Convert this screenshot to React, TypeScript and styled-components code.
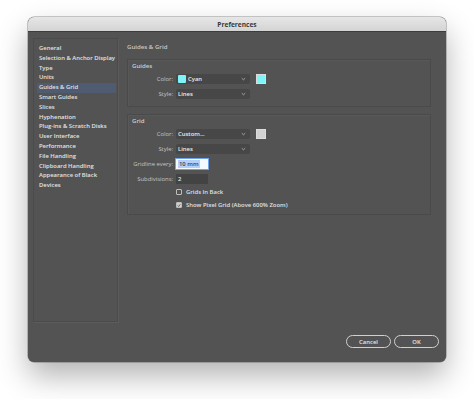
import React from 'react'
import styled, { createGlobalStyle } from 'styled-components'

const GlobalStyle = createGlobalStyle`
  html, body {
    margin: 0;
    padding: 0;
    background: #ffffff;
  }
  body {
    font-family: 'Open Sans', 'Liberation Sans', sans-serif;
    -webkit-font-smoothing: antialiased;
  }
`

const Page = styled.div`
  width: 474px;
  height: 399px;
  padding: 17px 0 0 28px;
  box-sizing: border-box;
`

const Window = styled.div`
  width: 418px;
  height: 345px;
  border-radius: 6px;
  overflow: hidden;
  display: flex;
  flex-direction: column;
  background: #535353;
  box-shadow: 0 14px 30px rgba(0, 0, 0, 0.3), 0 0 0 0.5px rgba(0, 0, 0, 0.4);
`

const TitleBar = styled.div`
  height: 15px;
  flex: none;
  display: flex;
  align-items: center;
  justify-content: center;
  background: linear-gradient(#e6e6e6, #d4d4d4);
  border-bottom: 1px solid #3c3c3c;
  box-sizing: border-box;
  font-size: 6.6px;
  font-weight: 700;
  color: #3a3a3a;
`

const Body = styled.div`
  flex: 1;
  display: flex;
  flex-direction: column;
  padding: 6px 15px 0 5px;
`

const Main = styled.div`
  display: flex;
  gap: 9px;
  height: 284px;
`

const Sidebar = styled.ul`
  width: 85px;
  margin: 0;
  padding: 5px 1px 0 3px;
  box-sizing: border-box;
  list-style: none;
  border: 1px solid #4b4b4b;
  box-shadow: 1px 1px 0 #5b5b5b;
`

const NavItem = styled.li<{ $active?: boolean }>`
  height: 9.8px;
  line-height: 9.8px;
  padding-left: 2px;
  font-size: 5.9px;
  font-weight: 600;
  color: #e4e4e4;
  white-space: nowrap;
  background: ${(p) => (p.$active ? '#4e5b70' : 'transparent')};
`

const Content = styled.div`
  flex: 1;
  display: flex;
  flex-direction: column;
  gap: 6px;
`

const Heading = styled.div`
  margin-top: 4px;
  height: 10px;
  line-height: 10px;
  font-size: 6.1px;
  font-weight: 600;
  color: #c9c9c9;
`

const Group = styled.div<{ $h: number }>`
  height: ${(p) => p.$h}px;
  box-sizing: border-box;
  border: 1px solid #4a4a4a;
  box-shadow: inset 1px 1px 0 #585858;
  padding: 1px 4px 0 4px;
  margin-top: 1px;
`

const GroupTitle = styled.div`
  height: 10px;
  line-height: 10px;
  font-size: 6.1px;
  font-weight: 600;
  color: #cfcfcf;
  margin-bottom: 2px;
`

const Rows = styled.div`
  display: grid;
  grid-template-columns: 41px auto;
  column-gap: 3px;
  row-gap: 4px;
  align-items: center;
  justify-items: start;
`

const Label = styled.span`
  justify-self: end;
  font-size: 5.9px;
  font-weight: 500;
  color: #c4c4c4;
  white-space: nowrap;
`

const Control = styled.div`
  display: flex;
  align-items: center;
  gap: 6px;
  height: 11px;
`

const Select = styled.div`
  width: 74px;
  height: 10px;
  box-sizing: border-box;
  display: flex;
  align-items: center;
  gap: 2px;
  padding: 0 4px 0 2px;
  background: #474747;
  border-radius: 2px;
  font-size: 5.9px;
  font-weight: 600;
  color: #ececec;
`

const SelectText = styled.span`
  flex: 1;
`

const Chip = styled.span<{ $c: string }>`
  width: 8px;
  height: 8px;
  background: ${(p) => p.$c};
  border-radius: 1px;
`

const Swatch = styled.div<{ $c: string }>`
  width: 10px;
  height: 10px;
  background: ${(p) => p.$c};
  border: 1px solid #dcdcdc;
  box-sizing: border-box;
`

const Field = styled.div<{ $focus?: boolean }>`
  width: 32px;
  height: 10px;
  box-sizing: border-box;
  display: flex;
  align-items: center;
  padding-left: 2px;
  font-size: 5.9px;
  font-weight: 600;
  background: ${(p) => (p.$focus ? '#f4f8ff' : '#434343')};
  color: ${(p) => (p.$focus ? '#2b3f63' : '#e8e8e8')};
  box-shadow: ${(p) => (p.$focus ? '0 0 0 1px #6fa2e8' : 'none')};
`

const Selected = styled.span`
  background: #b6d0f5;
  padding: 0 1px;
`

const Check = styled.div`
  grid-column: 2;
  display: flex;
  align-items: center;
  gap: 4px;
  height: 10px;
  margin-top: -1px;
  font-size: 5.9px;
  font-weight: 600;
  color: #e0e0e0;
`

const Box = styled.span<{ $on?: boolean }>`
  width: 6px;
  height: 6px;
  box-sizing: border-box;
  border: 1px solid #bdbdbd;
  border-radius: 1px;
  background: ${(p) => (p.$on ? '#cfcfcf' : 'transparent')};
  display: flex;
  align-items: center;
  justify-content: center;
`

const Footer = styled.div`
  display: flex;
  justify-content: flex-end;
  gap: 3px;
  margin-top: 13px;
  margin-right: -8px;
`

const Button = styled.button`
  width: 45px;
  height: 13px;
  padding: 0;
  border: 1px solid #d0d0d0;
  border-radius: 7px;
  background: transparent;
  color: #e6e6e6;
  font-family: inherit;
  font-size: 5.9px;
  font-weight: 600;
`

const Chevron = () => (
  <svg width="5" height="4" viewBox="0 0 5 4">
    <path d="M0.8 1.2 L2.5 2.8 L4.2 1.2" fill="none" stroke="#bdbdbd" strokeWidth="0.8" />
  </svg>
)

const Tick = () => (
  <svg width="5" height="5" viewBox="0 0 5 5">
    <path d="M0.9 2.6 L2 3.7 L4.1 1" fill="none" stroke="#3a3a3a" strokeWidth="0.9" />
  </svg>
)

const navItems = [
  'General',
  'Selection & Anchor Display',
  'Type',
  'Units',
  'Guides & Grid',
  'Smart Guides',
  'Slices',
  'Hyphenation',
  'Plug-ins & Scratch Disks',
  'User Interface',
  'Performance',
  'File Handling',
  'Clipboard Handling',
  'Appearance of Black',
  'Devices',
]

const App: React.FC = () => {
  return (
    <>
      <GlobalStyle />
      <Page>
        <Window>
          <TitleBar>Preferences</TitleBar>
          <Body>
            <Main>
              <Sidebar>
                {navItems.map((item) => (
                  <NavItem key={item} $active={item === 'Guides & Grid'}>
                    {item}
                  </NavItem>
                ))}
              </Sidebar>
              <Content>
                <Heading>Guides &amp; Grid</Heading>
                <Group $h={48}>
                  <GroupTitle>Guides</GroupTitle>
                  <Rows>
                    <Label>Color:</Label>
                    <Control>
                      <Select>
                        <Chip $c="#7ff3f7" />
                        <SelectText>Cyan</SelectText>
                        <Chevron />
                      </Select>
                      <Swatch $c="#7ff3f7" />
                    </Control>
                    <Label>Style:</Label>
                    <Control>
                      <Select>
                        <SelectText>Lines</SelectText>
                        <Chevron />
                      </Select>
                    </Control>
                  </Rows>
                </Group>
                <Group $h={101}>
                  <GroupTitle>Grid</GroupTitle>
                  <Rows>
                    <Label>Color:</Label>
                    <Control>
                      <Select>
                        <SelectText>Custom...</SelectText>
                        <Chevron />
                      </Select>
                      <Swatch $c="#d2d2d2" />
                    </Control>
                    <Label>Style:</Label>
                    <Control>
                      <Select>
                        <SelectText>Lines</SelectText>
                        <Chevron />
                      </Select>
                    </Control>
                    <Label>Gridline every:</Label>
                    <Control>
                      <Field $focus>
                        <Selected>10 mm</Selected>
                      </Field>
                    </Control>
                    <Label>Subdivisions:</Label>
                    <Control>
                      <Field>2</Field>
                    </Control>
                    <Check>
                      <Box />
                      Grids In Back
                    </Check>
                    <Check>
                      <Box $on>
                        <Tick />
                      </Box>
                      Show Pixel Grid (Above 600% Zoom)
                    </Check>
                  </Rows>
                </Group>
              </Content>
            </Main>
            <Footer>
              <Button>Cancel</Button>
              <Button>OK</Button>
            </Footer>
          </Body>
        </Window>
      </Page>
    </>
  )
}

export default App
